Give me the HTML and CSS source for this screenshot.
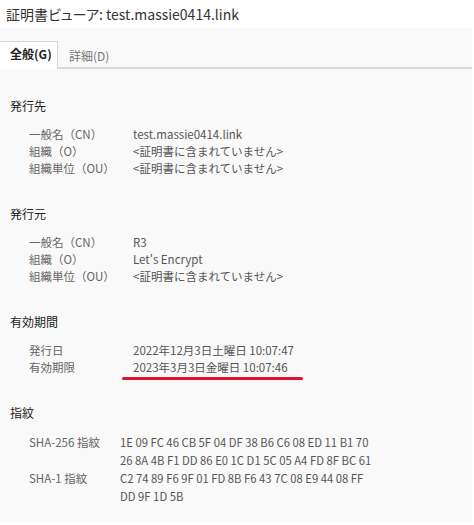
FILE: index.html
```html
<!DOCTYPE html>
<html lang="ja">
<head>
<meta charset="utf-8">
<title>証明書ビューア</title>
<link rel="stylesheet" href="styles.css">
</head>
<body>
<div class="window">
  <h1 class="title">証明書ビューア: test.massie0414.link</h1>
  <div class="tabbar">
    <div class="tab tab-active">全般(G)</div>
    <div class="tab">詳細(D)</div>
  </div>
  <div class="panel">
    <section class="section">
      <h2 class="heading">発行先</h2>
      <dl class="grid">
        <dt>一般名（CN）</dt><dd>test.massie0414.link</dd>
        <dt>組織（O）</dt><dd>&lt;証明書に含まれていません&gt;</dd>
        <dt>組織単位（OU）</dt><dd>&lt;証明書に含まれていません&gt;</dd>
      </dl>
    </section>
    <section class="section">
      <h2 class="heading">発行元</h2>
      <dl class="grid">
        <dt>一般名（CN）</dt><dd>R3</dd>
        <dt>組織（O）</dt><dd>Let's Encrypt</dd>
        <dt>組織単位（OU）</dt><dd>&lt;証明書に含まれていません&gt;</dd>
      </dl>
    </section>
    <section class="section">
      <h2 class="heading">有効期間</h2>
      <dl class="grid">
        <dt>発行日</dt><dd>2022年12月3日土曜日 10:07:47</dd>
        <dt>有効期限</dt><dd><span class="marked">2023年3月3日金曜日 10:07:46</span></dd>
      </dl>
    </section>
    <section class="section">
      <h2 class="heading">指紋</h2>
      <dl class="grid grid-narrow">
        <dt>SHA-256 指紋</dt><dd class="hex">1E 09 FC 46 CB 5F 04 DF 38 B6 C6 08 ED 11 B1 70<br>26 8A 4B F1 DD 86 E0 1C D1 5C 05 A4 FD 8F BC 61</dd>
        <dt>SHA-1 指紋</dt><dd class="hex">C2 74 89 F6 9F 01 FD 8B F6 43 7C 08 E9 44 08 FF<br>DD 9F 1D 5B</dd>
      </dl>
    </section>
  </div>
</div>
</body>
</html>
```
FILE: styles.css
```css
* { box-sizing: border-box; }
html, body {
  margin: 0;
  padding: 0;
  background: #ffffff;
}
body {
  font-family: "Noto Sans CJK JP", "Noto Sans", sans-serif;
  color: #333;
}
.window {
  width: 472px;
}
.title {
  margin: 0;
  height: 28px;
  padding: 4px 0 0 6px;
  font-size: 14px;
  font-weight: 400;
  line-height: 20px;
  color: #333;
  font-feature-settings: "palt";
}
.tabbar {
  display: flex;
  align-items: flex-end;
  height: 41px;
  padding-top: 14px;
  background: #f9f9f9;
  border-bottom: 2px solid #dadada;
}
.tab {
  height: 26px;
  line-height: 24px;
  padding: 0 10px;
  font-size: 12px;
  color: #777;
  border: 1px solid transparent;
  border-bottom: none;
  margin-bottom: -2px;
}
.tab-active {
  width: 58px;
  padding: 0 0 0 9px;
  background: #ffffff;
  color: #222;
  font-weight: 700;
  border-color: #d6d6d6;
  border-left-color: transparent;
  height: 28px;
}
.panel {
  background: #f9f9f9;
  padding: 28px 0 8px 0;
  min-height: 453px;
}
.section {
  margin-bottom: 28px;
}
.section:last-child { margin-bottom: 0; }
.heading {
  margin: 0 0 12px 10px;
  font-size: 12px;
  font-weight: 400;
  line-height: 17px;
  color: #222;
}
.grid {
  display: grid;
  grid-template-columns: 104px 1fr;
  margin: 0 0 0 29px;
  font-size: 11.5px;
  line-height: 17px;
}
.grid-narrow {
  grid-template-columns: 91px 1fr;
  line-height: 18px;
}
.grid dt {
  color: #666;
}
.grid dd {
  margin: 0;
  color: #555;
}
.hex {
  font-size: 11.3px;
}
.marked {
  position: relative;
  display: inline-block;
}
.marked::after {
  content: "";
  position: absolute;
  left: -11px;
  right: -15px;
  bottom: -4px;
  height: 3px;
  border-radius: 2px;
  background: #e0142c;
}
```
